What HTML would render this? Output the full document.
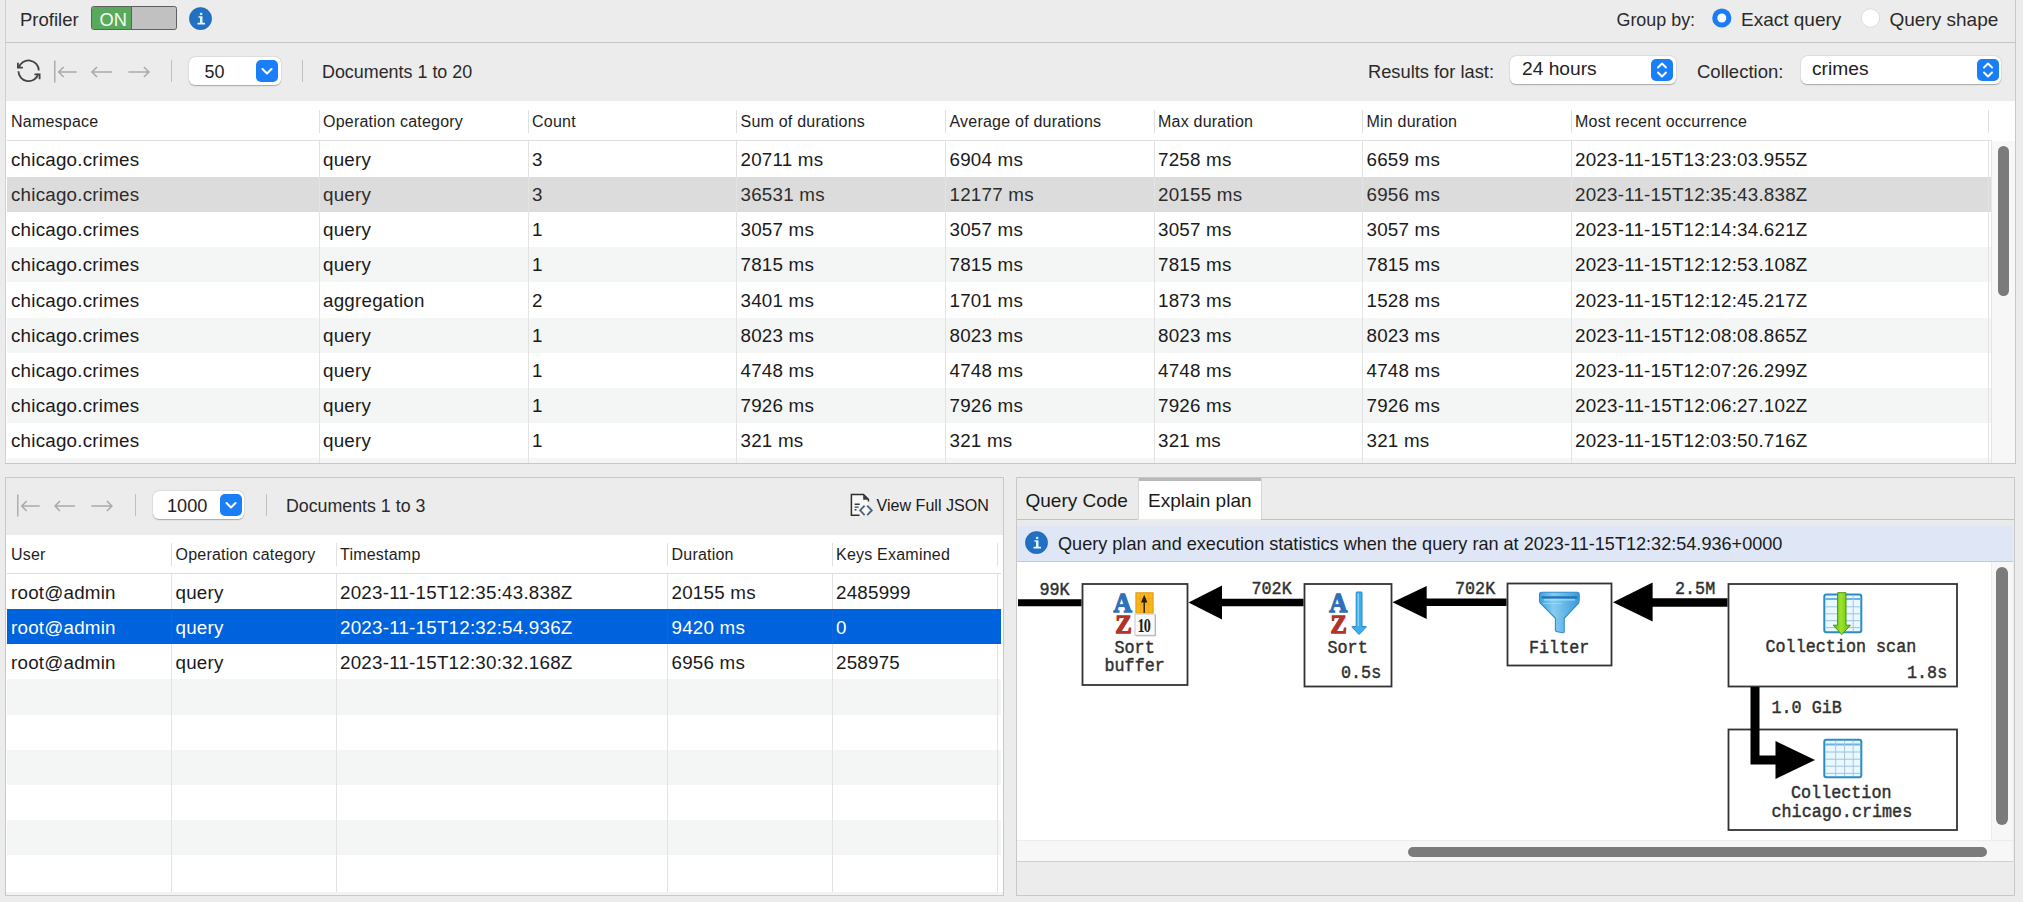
<!DOCTYPE html>
<html><head><meta charset="utf-8"><title>Profiler</title>
<style>
html,body{margin:0;padding:0}
body{width:2023px;height:902px;overflow:hidden;background:#ececec;position:relative;font-family:"Liberation Sans",sans-serif}
.r{position:absolute}
.t{position:absolute;white-space:pre;line-height:normal}
</style></head><body>
<div class="r" style="left:5px;top:0px;width:1px;height:464px;background:#d0d0d0"></div>
<div class="r" style="left:2015px;top:0px;width:1px;height:464px;background:#c8c8c8"></div>
<div class="r" style="left:5px;top:42px;width:1011px;height:1px;background:#c4c4c4"></div>
<div class="r" style="left:5px;top:42px;width:2011px;height:1px;background:#c4c4c4"></div>
<div class="t" style="left:20.00px;top:9.26px;font-size:18.5px;color:#2a2a2a;font-family:'Liberation Sans', sans-serif;font-weight:normal;">Profiler</div>
<div class="r" style="left:91px;top:6px;width:85.6px;height:24px;box-sizing:border-box;border:1.5px solid #5f5f5f;border-radius:2.5px;background:#c1c1c1;overflow:hidden"><div class="r" style="left:0;top:0;width:38.6px;height:24px;background:#59a95d;border-right:1.5px solid #5f5f5f"></div></div>
<div class="t" style="left:99.60px;top:9.24px;font-size:18.3px;color:#effff0;font-family:'Liberation Sans', sans-serif;font-weight:normal;">ON</div>
<svg class="r" style="left:189px;top:7px" width="23" height="23" viewBox="0 0 23 23"><circle cx="11.5" cy="11.6" r="11.1" fill="#2170c4" stroke="#1f5fa8" stroke-width="0.6"/><rect x="10.9" y="5.8" width="2.4" height="2.3" fill="#bff0ff"/><path d="M9.5 9.2H13.5V15.8H16V17.4H8.5V15.8H11V10.8H9.5Z" fill="#e4f6ff"/></svg>
<div class="t" style="left:1616.50px;top:9.80px;font-size:17.9px;color:#2a2a2a;font-family:'Liberation Sans', sans-serif;font-weight:normal;">Group by:</div>
<svg class="r" style="left:1711px;top:8px" width="22" height="22" viewBox="0 0 22 22"><circle cx="10.8" cy="10" r="9.6" fill="#1b7cf4"/><circle cx="10.8" cy="10" r="4.5" fill="#fff"/></svg>
<div class="t" style="left:1741.00px;top:8.80px;font-size:19px;color:#2a2a2a;font-family:'Liberation Sans', sans-serif;font-weight:normal;">Exact query</div>
<svg class="r" style="left:1860px;top:8px" width="22" height="22" viewBox="0 0 22 22"><circle cx="10.5" cy="10" r="9.2" fill="#fff" stroke="#d6d6d6" stroke-width="0.8"/></svg>
<div class="t" style="left:1889.50px;top:8.80px;font-size:19px;color:#2a2a2a;font-family:'Liberation Sans', sans-serif;font-weight:normal;">Query shape</div>
<svg class="r" style="left:0;top:0" width="60" height="100" viewBox="0 0 60 100"><path d="M18.8 67.8A10.2 10.2 0 0 1 38.8 70.6" fill="none" stroke="#424242" stroke-width="1.8"/><path d="M18.4 71.2A10.2 10.2 0 0 0 38.4 73.8" fill="none" stroke="#424242" stroke-width="1.8"/><path d="M17.9 62.8V67.7H22.9" fill="none" stroke="#424242" stroke-width="1.8"/><path d="M34.5 74.3H39.6V79.3" fill="none" stroke="#424242" stroke-width="1.8"/></svg>
<svg class="r" style="left:54px;top:59.5px" width="100" height="24" viewBox="0 0 100 24"><path d="M0.8 0.5v22" stroke="#a9a9a9" stroke-width="1.4" fill="none"/><path d="M4.6 12h18.1M9.7 7l-5 5 5 5" stroke="#a9a9a9" stroke-width="1.5" fill="none"/><path d="M38 12h20M43 7l-5 5 5 5" stroke="#a9a9a9" stroke-width="1.5" fill="none"/><path d="M74.4 12h20.5M89.9 7l5 5-5 5" stroke="#a9a9a9" stroke-width="1.5" fill="none"/></svg>
<div class="r" style="left:171px;top:60px;width:1px;height:22px;background:#c0c0c0"></div>
<div class="r" style="left:189px;top:57px;width:92px;height:28px;background:#fff;border-radius:6px;box-shadow:0 0.6px 1.2px rgba(0,0,0,0.28), 0 0 0 0.5px rgba(0,0,0,0.05)"></div>
<div class="r" style="left:256px;top:60px;width:22px;height:22px;background:#1a7ef6;border-radius:5px"></div>
<svg class="r" style="left:256px;top:60px" width="22" height="22" viewBox="0 0 22 22"><path d="M6.5 9l4.5 4.5 4.5-4.5" stroke="#fff" stroke-width="2.1" fill="none" stroke-linecap="round" stroke-linejoin="round"/></svg>
<div class="t" style="left:204.50px;top:61.80px;font-size:17.9px;color:#222;font-family:'Liberation Sans', sans-serif;font-weight:normal;">50</div>
<div class="r" style="left:302px;top:60px;width:1px;height:22px;background:#c0c0c0"></div>
<div class="t" style="left:322.00px;top:61.80px;font-size:17.9px;color:#2a2a2a;font-family:'Liberation Sans', sans-serif;font-weight:normal;">Documents 1 to 20</div>
<div class="t" style="left:1368.00px;top:61.44px;font-size:18.3px;color:#2a2a2a;font-family:'Liberation Sans', sans-serif;font-weight:normal;">Results for last:</div>
<div class="r" style="left:1510px;top:56px;width:166px;height:28px;background:#fff;border-radius:6px;box-shadow:0 0.6px 1.2px rgba(0,0,0,0.28), 0 0 0 0.5px rgba(0,0,0,0.05)"></div>
<div class="r" style="left:1651px;top:59px;width:22px;height:22px;background:#1a7ef6;border-radius:5px"></div>
<svg class="r" style="left:1651px;top:59px" width="22" height="22" viewBox="0 0 22 22"><path d="M7 8.5l4-4 4 4M7 13.5l4 4 4-4" stroke="#fff" stroke-width="1.9" fill="none" stroke-linecap="round" stroke-linejoin="round"/></svg>
<div class="t" style="left:1522.00px;top:57.92px;font-size:19.2px;color:#222;font-family:'Liberation Sans', sans-serif;font-weight:normal;">24 hours</div>
<div class="t" style="left:1697.00px;top:60.76px;font-size:18.5px;color:#2a2a2a;font-family:'Liberation Sans', sans-serif;font-weight:normal;">Collection:</div>
<div class="r" style="left:1801px;top:56px;width:200px;height:28px;background:#fff;border-radius:6px;box-shadow:0 0.6px 1.2px rgba(0,0,0,0.28), 0 0 0 0.5px rgba(0,0,0,0.05)"></div>
<div class="r" style="left:1977px;top:59px;width:22px;height:22px;background:#1a7ef6;border-radius:5px"></div>
<svg class="r" style="left:1977px;top:59px" width="22" height="22" viewBox="0 0 22 22"><path d="M7 8.5l4-4 4 4M7 13.5l4 4 4-4" stroke="#fff" stroke-width="1.9" fill="none" stroke-linecap="round" stroke-linejoin="round"/></svg>
<div class="t" style="left:1812.00px;top:57.92px;font-size:19.2px;color:#222;font-family:'Liberation Sans', sans-serif;font-weight:normal;">crimes</div>
<div class="r" style="left:6px;top:101px;width:2009px;height:363px;background:#fff"></div>
<div class="r" style="left:7px;top:140px;width:1985px;height:1px;background:#dedede"></div>
<div class="r" style="left:7px;top:141.00px;width:1985px;height:36.00px;background:#ffffff"></div>
<div class="r" style="left:7px;top:177.00px;width:1985px;height:35.15px;background:#dcdcdc"></div>
<div class="r" style="left:7px;top:212.15px;width:1985px;height:35.15px;background:#ffffff"></div>
<div class="r" style="left:7px;top:247.30px;width:1985px;height:35.15px;background:#f4f5f5"></div>
<div class="r" style="left:7px;top:282.45px;width:1985px;height:35.15px;background:#ffffff"></div>
<div class="r" style="left:7px;top:317.60px;width:1985px;height:35.15px;background:#f4f5f5"></div>
<div class="r" style="left:7px;top:352.75px;width:1985px;height:35.15px;background:#ffffff"></div>
<div class="r" style="left:7px;top:387.90px;width:1985px;height:35.15px;background:#f4f5f5"></div>
<div class="r" style="left:7px;top:423.05px;width:1985px;height:35.15px;background:#ffffff"></div>
<div class="r" style="left:7px;top:458.20px;width:1985px;height:0.80px;background:#f4f5f5"></div>
<div class="r" style="left:7px;top:459px;width:1985px;height:4px;background:#f5f5f5"></div>
<div class="r" style="left:319px;top:110px;width:1px;height:23px;background:#e0e0e0"></div>
<div class="r" style="left:319px;top:141px;width:1px;height:322px;background:#e3e3e3"></div>
<div class="r" style="left:528px;top:110px;width:1px;height:23px;background:#e0e0e0"></div>
<div class="r" style="left:528px;top:141px;width:1px;height:322px;background:#e3e3e3"></div>
<div class="r" style="left:736px;top:110px;width:1px;height:23px;background:#e0e0e0"></div>
<div class="r" style="left:736px;top:141px;width:1px;height:322px;background:#e3e3e3"></div>
<div class="r" style="left:945px;top:110px;width:1px;height:23px;background:#e0e0e0"></div>
<div class="r" style="left:945px;top:141px;width:1px;height:322px;background:#e3e3e3"></div>
<div class="r" style="left:1154px;top:110px;width:1px;height:23px;background:#e0e0e0"></div>
<div class="r" style="left:1154px;top:141px;width:1px;height:322px;background:#e3e3e3"></div>
<div class="r" style="left:1362px;top:110px;width:1px;height:23px;background:#e0e0e0"></div>
<div class="r" style="left:1362px;top:141px;width:1px;height:322px;background:#e3e3e3"></div>
<div class="r" style="left:1571px;top:110px;width:1px;height:23px;background:#e0e0e0"></div>
<div class="r" style="left:1571px;top:141px;width:1px;height:322px;background:#e3e3e3"></div>
<div class="r" style="left:1988px;top:110px;width:1px;height:23px;background:#e0e0e0"></div>
<div class="r" style="left:1988px;top:141px;width:1px;height:322px;background:#e3e3e3"></div>
<div class="t" style="left:11.00px;top:113.02px;font-size:16px;color:#1e1e1e;font-family:'Liberation Sans', sans-serif;font-weight:normal;letter-spacing:0.22px">Namespace</div>
<div class="t" style="left:323.00px;top:113.02px;font-size:16px;color:#1e1e1e;font-family:'Liberation Sans', sans-serif;font-weight:normal;letter-spacing:0.22px">Operation category</div>
<div class="t" style="left:532.00px;top:113.02px;font-size:16px;color:#1e1e1e;font-family:'Liberation Sans', sans-serif;font-weight:normal;letter-spacing:0.22px">Count</div>
<div class="t" style="left:740.50px;top:113.02px;font-size:16px;color:#1e1e1e;font-family:'Liberation Sans', sans-serif;font-weight:normal;letter-spacing:0.22px">Sum of durations</div>
<div class="t" style="left:949.50px;top:113.02px;font-size:16px;color:#1e1e1e;font-family:'Liberation Sans', sans-serif;font-weight:normal;letter-spacing:0.22px">Average of durations</div>
<div class="t" style="left:1158.00px;top:113.02px;font-size:16px;color:#1e1e1e;font-family:'Liberation Sans', sans-serif;font-weight:normal;letter-spacing:0.22px">Max duration</div>
<div class="t" style="left:1366.50px;top:113.02px;font-size:16px;color:#1e1e1e;font-family:'Liberation Sans', sans-serif;font-weight:normal;letter-spacing:0.22px">Min duration</div>
<div class="t" style="left:1575.00px;top:113.02px;font-size:16px;color:#1e1e1e;font-family:'Liberation Sans', sans-serif;font-weight:normal;letter-spacing:0.22px">Most recent occurrence</div>
<div class="t" style="left:11.00px;top:148.99px;font-size:18.8px;color:#1a1a1a;font-family:'Liberation Sans', sans-serif;font-weight:normal;letter-spacing:0.22px">chicago.crimes</div>
<div class="t" style="left:323.00px;top:148.99px;font-size:18.8px;color:#1a1a1a;font-family:'Liberation Sans', sans-serif;font-weight:normal;letter-spacing:0.22px">query</div>
<div class="t" style="left:532.00px;top:148.99px;font-size:18.8px;color:#1a1a1a;font-family:'Liberation Sans', sans-serif;font-weight:normal;letter-spacing:0.22px">3</div>
<div class="t" style="left:740.50px;top:148.99px;font-size:18.8px;color:#1a1a1a;font-family:'Liberation Sans', sans-serif;font-weight:normal;letter-spacing:0.22px">20711 ms</div>
<div class="t" style="left:949.50px;top:148.99px;font-size:18.8px;color:#1a1a1a;font-family:'Liberation Sans', sans-serif;font-weight:normal;letter-spacing:0.22px">6904 ms</div>
<div class="t" style="left:1158.00px;top:148.99px;font-size:18.8px;color:#1a1a1a;font-family:'Liberation Sans', sans-serif;font-weight:normal;letter-spacing:0.22px">7258 ms</div>
<div class="t" style="left:1366.50px;top:148.99px;font-size:18.8px;color:#1a1a1a;font-family:'Liberation Sans', sans-serif;font-weight:normal;letter-spacing:0.22px">6659 ms</div>
<div class="t" style="left:1575.00px;top:148.99px;font-size:18.8px;color:#1a1a1a;font-family:'Liberation Sans', sans-serif;font-weight:normal;letter-spacing:0.22px">2023-11-15T13:23:03.955Z</div>
<div class="t" style="left:11.00px;top:184.14px;font-size:18.8px;color:#2c2c2c;font-family:'Liberation Sans', sans-serif;font-weight:normal;letter-spacing:0.22px">chicago.crimes</div>
<div class="t" style="left:323.00px;top:184.14px;font-size:18.8px;color:#2c2c2c;font-family:'Liberation Sans', sans-serif;font-weight:normal;letter-spacing:0.22px">query</div>
<div class="t" style="left:532.00px;top:184.14px;font-size:18.8px;color:#2c2c2c;font-family:'Liberation Sans', sans-serif;font-weight:normal;letter-spacing:0.22px">3</div>
<div class="t" style="left:740.50px;top:184.14px;font-size:18.8px;color:#2c2c2c;font-family:'Liberation Sans', sans-serif;font-weight:normal;letter-spacing:0.22px">36531 ms</div>
<div class="t" style="left:949.50px;top:184.14px;font-size:18.8px;color:#2c2c2c;font-family:'Liberation Sans', sans-serif;font-weight:normal;letter-spacing:0.22px">12177 ms</div>
<div class="t" style="left:1158.00px;top:184.14px;font-size:18.8px;color:#2c2c2c;font-family:'Liberation Sans', sans-serif;font-weight:normal;letter-spacing:0.22px">20155 ms</div>
<div class="t" style="left:1366.50px;top:184.14px;font-size:18.8px;color:#2c2c2c;font-family:'Liberation Sans', sans-serif;font-weight:normal;letter-spacing:0.22px">6956 ms</div>
<div class="t" style="left:1575.00px;top:184.14px;font-size:18.8px;color:#2c2c2c;font-family:'Liberation Sans', sans-serif;font-weight:normal;letter-spacing:0.22px">2023-11-15T12:35:43.838Z</div>
<div class="t" style="left:11.00px;top:219.29px;font-size:18.8px;color:#1a1a1a;font-family:'Liberation Sans', sans-serif;font-weight:normal;letter-spacing:0.22px">chicago.crimes</div>
<div class="t" style="left:323.00px;top:219.29px;font-size:18.8px;color:#1a1a1a;font-family:'Liberation Sans', sans-serif;font-weight:normal;letter-spacing:0.22px">query</div>
<div class="t" style="left:532.00px;top:219.29px;font-size:18.8px;color:#1a1a1a;font-family:'Liberation Sans', sans-serif;font-weight:normal;letter-spacing:0.22px">1</div>
<div class="t" style="left:740.50px;top:219.29px;font-size:18.8px;color:#1a1a1a;font-family:'Liberation Sans', sans-serif;font-weight:normal;letter-spacing:0.22px">3057 ms</div>
<div class="t" style="left:949.50px;top:219.29px;font-size:18.8px;color:#1a1a1a;font-family:'Liberation Sans', sans-serif;font-weight:normal;letter-spacing:0.22px">3057 ms</div>
<div class="t" style="left:1158.00px;top:219.29px;font-size:18.8px;color:#1a1a1a;font-family:'Liberation Sans', sans-serif;font-weight:normal;letter-spacing:0.22px">3057 ms</div>
<div class="t" style="left:1366.50px;top:219.29px;font-size:18.8px;color:#1a1a1a;font-family:'Liberation Sans', sans-serif;font-weight:normal;letter-spacing:0.22px">3057 ms</div>
<div class="t" style="left:1575.00px;top:219.29px;font-size:18.8px;color:#1a1a1a;font-family:'Liberation Sans', sans-serif;font-weight:normal;letter-spacing:0.22px">2023-11-15T12:14:34.621Z</div>
<div class="t" style="left:11.00px;top:254.44px;font-size:18.8px;color:#1a1a1a;font-family:'Liberation Sans', sans-serif;font-weight:normal;letter-spacing:0.22px">chicago.crimes</div>
<div class="t" style="left:323.00px;top:254.44px;font-size:18.8px;color:#1a1a1a;font-family:'Liberation Sans', sans-serif;font-weight:normal;letter-spacing:0.22px">query</div>
<div class="t" style="left:532.00px;top:254.44px;font-size:18.8px;color:#1a1a1a;font-family:'Liberation Sans', sans-serif;font-weight:normal;letter-spacing:0.22px">1</div>
<div class="t" style="left:740.50px;top:254.44px;font-size:18.8px;color:#1a1a1a;font-family:'Liberation Sans', sans-serif;font-weight:normal;letter-spacing:0.22px">7815 ms</div>
<div class="t" style="left:949.50px;top:254.44px;font-size:18.8px;color:#1a1a1a;font-family:'Liberation Sans', sans-serif;font-weight:normal;letter-spacing:0.22px">7815 ms</div>
<div class="t" style="left:1158.00px;top:254.44px;font-size:18.8px;color:#1a1a1a;font-family:'Liberation Sans', sans-serif;font-weight:normal;letter-spacing:0.22px">7815 ms</div>
<div class="t" style="left:1366.50px;top:254.44px;font-size:18.8px;color:#1a1a1a;font-family:'Liberation Sans', sans-serif;font-weight:normal;letter-spacing:0.22px">7815 ms</div>
<div class="t" style="left:1575.00px;top:254.44px;font-size:18.8px;color:#1a1a1a;font-family:'Liberation Sans', sans-serif;font-weight:normal;letter-spacing:0.22px">2023-11-15T12:12:53.108Z</div>
<div class="t" style="left:11.00px;top:289.59px;font-size:18.8px;color:#1a1a1a;font-family:'Liberation Sans', sans-serif;font-weight:normal;letter-spacing:0.22px">chicago.crimes</div>
<div class="t" style="left:323.00px;top:289.59px;font-size:18.8px;color:#1a1a1a;font-family:'Liberation Sans', sans-serif;font-weight:normal;letter-spacing:0.22px">aggregation</div>
<div class="t" style="left:532.00px;top:289.59px;font-size:18.8px;color:#1a1a1a;font-family:'Liberation Sans', sans-serif;font-weight:normal;letter-spacing:0.22px">2</div>
<div class="t" style="left:740.50px;top:289.59px;font-size:18.8px;color:#1a1a1a;font-family:'Liberation Sans', sans-serif;font-weight:normal;letter-spacing:0.22px">3401 ms</div>
<div class="t" style="left:949.50px;top:289.59px;font-size:18.8px;color:#1a1a1a;font-family:'Liberation Sans', sans-serif;font-weight:normal;letter-spacing:0.22px">1701 ms</div>
<div class="t" style="left:1158.00px;top:289.59px;font-size:18.8px;color:#1a1a1a;font-family:'Liberation Sans', sans-serif;font-weight:normal;letter-spacing:0.22px">1873 ms</div>
<div class="t" style="left:1366.50px;top:289.59px;font-size:18.8px;color:#1a1a1a;font-family:'Liberation Sans', sans-serif;font-weight:normal;letter-spacing:0.22px">1528 ms</div>
<div class="t" style="left:1575.00px;top:289.59px;font-size:18.8px;color:#1a1a1a;font-family:'Liberation Sans', sans-serif;font-weight:normal;letter-spacing:0.22px">2023-11-15T12:12:45.217Z</div>
<div class="t" style="left:11.00px;top:324.74px;font-size:18.8px;color:#1a1a1a;font-family:'Liberation Sans', sans-serif;font-weight:normal;letter-spacing:0.22px">chicago.crimes</div>
<div class="t" style="left:323.00px;top:324.74px;font-size:18.8px;color:#1a1a1a;font-family:'Liberation Sans', sans-serif;font-weight:normal;letter-spacing:0.22px">query</div>
<div class="t" style="left:532.00px;top:324.74px;font-size:18.8px;color:#1a1a1a;font-family:'Liberation Sans', sans-serif;font-weight:normal;letter-spacing:0.22px">1</div>
<div class="t" style="left:740.50px;top:324.74px;font-size:18.8px;color:#1a1a1a;font-family:'Liberation Sans', sans-serif;font-weight:normal;letter-spacing:0.22px">8023 ms</div>
<div class="t" style="left:949.50px;top:324.74px;font-size:18.8px;color:#1a1a1a;font-family:'Liberation Sans', sans-serif;font-weight:normal;letter-spacing:0.22px">8023 ms</div>
<div class="t" style="left:1158.00px;top:324.74px;font-size:18.8px;color:#1a1a1a;font-family:'Liberation Sans', sans-serif;font-weight:normal;letter-spacing:0.22px">8023 ms</div>
<div class="t" style="left:1366.50px;top:324.74px;font-size:18.8px;color:#1a1a1a;font-family:'Liberation Sans', sans-serif;font-weight:normal;letter-spacing:0.22px">8023 ms</div>
<div class="t" style="left:1575.00px;top:324.74px;font-size:18.8px;color:#1a1a1a;font-family:'Liberation Sans', sans-serif;font-weight:normal;letter-spacing:0.22px">2023-11-15T12:08:08.865Z</div>
<div class="t" style="left:11.00px;top:359.89px;font-size:18.8px;color:#1a1a1a;font-family:'Liberation Sans', sans-serif;font-weight:normal;letter-spacing:0.22px">chicago.crimes</div>
<div class="t" style="left:323.00px;top:359.89px;font-size:18.8px;color:#1a1a1a;font-family:'Liberation Sans', sans-serif;font-weight:normal;letter-spacing:0.22px">query</div>
<div class="t" style="left:532.00px;top:359.89px;font-size:18.8px;color:#1a1a1a;font-family:'Liberation Sans', sans-serif;font-weight:normal;letter-spacing:0.22px">1</div>
<div class="t" style="left:740.50px;top:359.89px;font-size:18.8px;color:#1a1a1a;font-family:'Liberation Sans', sans-serif;font-weight:normal;letter-spacing:0.22px">4748 ms</div>
<div class="t" style="left:949.50px;top:359.89px;font-size:18.8px;color:#1a1a1a;font-family:'Liberation Sans', sans-serif;font-weight:normal;letter-spacing:0.22px">4748 ms</div>
<div class="t" style="left:1158.00px;top:359.89px;font-size:18.8px;color:#1a1a1a;font-family:'Liberation Sans', sans-serif;font-weight:normal;letter-spacing:0.22px">4748 ms</div>
<div class="t" style="left:1366.50px;top:359.89px;font-size:18.8px;color:#1a1a1a;font-family:'Liberation Sans', sans-serif;font-weight:normal;letter-spacing:0.22px">4748 ms</div>
<div class="t" style="left:1575.00px;top:359.89px;font-size:18.8px;color:#1a1a1a;font-family:'Liberation Sans', sans-serif;font-weight:normal;letter-spacing:0.22px">2023-11-15T12:07:26.299Z</div>
<div class="t" style="left:11.00px;top:395.04px;font-size:18.8px;color:#1a1a1a;font-family:'Liberation Sans', sans-serif;font-weight:normal;letter-spacing:0.22px">chicago.crimes</div>
<div class="t" style="left:323.00px;top:395.04px;font-size:18.8px;color:#1a1a1a;font-family:'Liberation Sans', sans-serif;font-weight:normal;letter-spacing:0.22px">query</div>
<div class="t" style="left:532.00px;top:395.04px;font-size:18.8px;color:#1a1a1a;font-family:'Liberation Sans', sans-serif;font-weight:normal;letter-spacing:0.22px">1</div>
<div class="t" style="left:740.50px;top:395.04px;font-size:18.8px;color:#1a1a1a;font-family:'Liberation Sans', sans-serif;font-weight:normal;letter-spacing:0.22px">7926 ms</div>
<div class="t" style="left:949.50px;top:395.04px;font-size:18.8px;color:#1a1a1a;font-family:'Liberation Sans', sans-serif;font-weight:normal;letter-spacing:0.22px">7926 ms</div>
<div class="t" style="left:1158.00px;top:395.04px;font-size:18.8px;color:#1a1a1a;font-family:'Liberation Sans', sans-serif;font-weight:normal;letter-spacing:0.22px">7926 ms</div>
<div class="t" style="left:1366.50px;top:395.04px;font-size:18.8px;color:#1a1a1a;font-family:'Liberation Sans', sans-serif;font-weight:normal;letter-spacing:0.22px">7926 ms</div>
<div class="t" style="left:1575.00px;top:395.04px;font-size:18.8px;color:#1a1a1a;font-family:'Liberation Sans', sans-serif;font-weight:normal;letter-spacing:0.22px">2023-11-15T12:06:27.102Z</div>
<div class="t" style="left:11.00px;top:430.19px;font-size:18.8px;color:#1a1a1a;font-family:'Liberation Sans', sans-serif;font-weight:normal;letter-spacing:0.22px">chicago.crimes</div>
<div class="t" style="left:323.00px;top:430.19px;font-size:18.8px;color:#1a1a1a;font-family:'Liberation Sans', sans-serif;font-weight:normal;letter-spacing:0.22px">query</div>
<div class="t" style="left:532.00px;top:430.19px;font-size:18.8px;color:#1a1a1a;font-family:'Liberation Sans', sans-serif;font-weight:normal;letter-spacing:0.22px">1</div>
<div class="t" style="left:740.50px;top:430.19px;font-size:18.8px;color:#1a1a1a;font-family:'Liberation Sans', sans-serif;font-weight:normal;letter-spacing:0.22px">321 ms</div>
<div class="t" style="left:949.50px;top:430.19px;font-size:18.8px;color:#1a1a1a;font-family:'Liberation Sans', sans-serif;font-weight:normal;letter-spacing:0.22px">321 ms</div>
<div class="t" style="left:1158.00px;top:430.19px;font-size:18.8px;color:#1a1a1a;font-family:'Liberation Sans', sans-serif;font-weight:normal;letter-spacing:0.22px">321 ms</div>
<div class="t" style="left:1366.50px;top:430.19px;font-size:18.8px;color:#1a1a1a;font-family:'Liberation Sans', sans-serif;font-weight:normal;letter-spacing:0.22px">321 ms</div>
<div class="t" style="left:1575.00px;top:430.19px;font-size:18.8px;color:#1a1a1a;font-family:'Liberation Sans', sans-serif;font-weight:normal;letter-spacing:0.22px">2023-11-15T12:03:50.716Z</div>
<div class="r" style="left:1991px;top:141px;width:24px;height:322px;background:#f7f7f7;border-left:1px solid #e6e6e6;box-sizing:border-box;width:24px"></div>
<div class="r" style="left:1998px;top:145.5px;width:11px;height:150px;background:#7b7b7b;border-radius:6px"></div>
<div class="r" style="left:5px;top:463px;width:1011px;height:1px;background:#c8c8c8"></div>
<div class="r" style="left:5px;top:463px;width:2011px;height:1px;background:#c8c8c8"></div>
<div class="r" style="left:5px;top:477px;width:999px;height:419px;background:#ececec;border:1px solid #c8c8c8;box-sizing:border-box"></div>
<svg class="r" style="left:17.2px;top:493.5px" width="100" height="24" viewBox="0 0 100 24"><path d="M0.8 0.5v22" stroke="#a9a9a9" stroke-width="1.4" fill="none"/><path d="M4.6 12h18.1M9.7 7l-5 5 5 5" stroke="#a9a9a9" stroke-width="1.5" fill="none"/><path d="M38 12h20M43 7l-5 5 5 5" stroke="#a9a9a9" stroke-width="1.5" fill="none"/><path d="M74.4 12h20.5M89.9 7l5 5-5 5" stroke="#a9a9a9" stroke-width="1.5" fill="none"/></svg>
<div class="r" style="left:135px;top:494px;width:1px;height:22px;background:#c0c0c0"></div>
<div class="r" style="left:152.5px;top:491px;width:91.5px;height:28px;background:#fff;border-radius:6px;box-shadow:0 0.6px 1.2px rgba(0,0,0,0.28), 0 0 0 0.5px rgba(0,0,0,0.05)"></div>
<div class="r" style="left:219.5px;top:494px;width:22px;height:22px;background:#1a7ef6;border-radius:5px"></div>
<svg class="r" style="left:219.5px;top:494px" width="22" height="22" viewBox="0 0 22 22"><path d="M6.5 9l4.5 4.5 4.5-4.5" stroke="#fff" stroke-width="2.1" fill="none" stroke-linecap="round" stroke-linejoin="round"/></svg>
<div class="t" style="left:167.00px;top:495.62px;font-size:18.1px;color:#222;font-family:'Liberation Sans', sans-serif;font-weight:normal;">1000</div>
<div class="r" style="left:266px;top:494px;width:1px;height:22px;background:#c0c0c0"></div>
<div class="t" style="left:286.00px;top:495.89px;font-size:17.8px;color:#2a2a2a;font-family:'Liberation Sans', sans-serif;font-weight:normal;">Documents 1 to 3</div>
<svg class="r" style="left:0;top:0" width="1000" height="530" viewBox="0 0 1000 530"><path d="M851.5 515.2V494.5H863.4L868.3 499.4V516H851.5Z" fill="#f8f8f8"/><path d="M859.6 515.3H851.4V494.4H863.5L868.4 499.3V501.5" fill="none" stroke="#2e2e2e" stroke-width="1.5"/><path d="M863.2 494.6L868.2 499.7H863.2Z" fill="#3a3a3a"/><path d="M854.6 504.3H859.8M854.6 507.1H858.6M854.6 509.7H856.5" stroke="#3c3c3c" stroke-width="1.4"/><path d="M864.6 505.6L860.1 510.4L864.6 515.2M867.2 505.6L871.8 510.4L867.2 515.2" fill="none" stroke="#4b6379" stroke-width="1.8"/></svg>
<div class="t" style="left:876.50px;top:495.93px;font-size:16.1px;color:#1a1a1a;font-family:'Liberation Sans', sans-serif;font-weight:normal;">View Full JSON</div>
<div class="r" style="left:6px;top:534.5px;width:997px;height:360px;background:#fff"></div>
<div class="r" style="left:7px;top:573px;width:994px;height:1px;background:#dedede"></div>
<div class="r" style="left:7px;top:574.00px;width:994px;height:35.15px;background:#ffffff"></div>
<div class="r" style="left:7px;top:609.15px;width:994px;height:35.15px;background:#0063de"></div>
<div class="r" style="left:7px;top:644.30px;width:994px;height:35.15px;background:#ffffff"></div>
<div class="r" style="left:7px;top:679.45px;width:994px;height:35.15px;background:#f4f5f5"></div>
<div class="r" style="left:7px;top:714.60px;width:994px;height:35.15px;background:#ffffff"></div>
<div class="r" style="left:7px;top:749.75px;width:994px;height:35.15px;background:#f4f5f5"></div>
<div class="r" style="left:7px;top:784.90px;width:994px;height:35.15px;background:#ffffff"></div>
<div class="r" style="left:7px;top:820.05px;width:994px;height:35.15px;background:#f4f5f5"></div>
<div class="r" style="left:7px;top:855.20px;width:994px;height:35.15px;background:#ffffff"></div>
<div class="r" style="left:171px;top:543px;width:1px;height:23px;background:#e0e0e0"></div>
<div class="r" style="left:171px;top:574px;width:1px;height:318px;background:#e3e3e3"></div>
<div class="r" style="left:336px;top:543px;width:1px;height:23px;background:#e0e0e0"></div>
<div class="r" style="left:336px;top:574px;width:1px;height:318px;background:#e3e3e3"></div>
<div class="r" style="left:667px;top:543px;width:1px;height:23px;background:#e0e0e0"></div>
<div class="r" style="left:667px;top:574px;width:1px;height:318px;background:#e3e3e3"></div>
<div class="r" style="left:832px;top:543px;width:1px;height:23px;background:#e0e0e0"></div>
<div class="r" style="left:832px;top:574px;width:1px;height:318px;background:#e3e3e3"></div>
<div class="r" style="left:997px;top:543px;width:1px;height:23px;background:#e0e0e0"></div>
<div class="r" style="left:997px;top:574px;width:1px;height:318px;background:#e3e3e3"></div>
<div class="r" style="left:7px;top:609.15px;width:994px;height:35.15px;background:#0063de"></div>
<div class="r" style="left:171px;top:610px;width:1px;height:34px;background:#1a6ad8;opacity:0.6"></div>
<div class="r" style="left:336px;top:610px;width:1px;height:34px;background:#1a6ad8;opacity:0.6"></div>
<div class="r" style="left:667px;top:610px;width:1px;height:34px;background:#1a6ad8;opacity:0.6"></div>
<div class="r" style="left:832px;top:610px;width:1px;height:34px;background:#1a6ad8;opacity:0.6"></div>
<div class="t" style="left:11.00px;top:546.02px;font-size:16px;color:#1e1e1e;font-family:'Liberation Sans', sans-serif;font-weight:normal;letter-spacing:0.22px">User</div>
<div class="t" style="left:175.50px;top:546.02px;font-size:16px;color:#1e1e1e;font-family:'Liberation Sans', sans-serif;font-weight:normal;letter-spacing:0.22px">Operation category</div>
<div class="t" style="left:340.00px;top:546.02px;font-size:16px;color:#1e1e1e;font-family:'Liberation Sans', sans-serif;font-weight:normal;letter-spacing:0.22px">Timestamp</div>
<div class="t" style="left:671.50px;top:546.02px;font-size:16px;color:#1e1e1e;font-family:'Liberation Sans', sans-serif;font-weight:normal;letter-spacing:0.22px">Duration</div>
<div class="t" style="left:836.00px;top:546.02px;font-size:16px;color:#1e1e1e;font-family:'Liberation Sans', sans-serif;font-weight:normal;letter-spacing:0.22px">Keys Examined</div>
<div class="t" style="left:11.00px;top:581.99px;font-size:18.8px;color:#1a1a1a;font-family:'Liberation Sans', sans-serif;font-weight:normal;letter-spacing:0.22px">root@admin</div>
<div class="t" style="left:175.50px;top:581.99px;font-size:18.8px;color:#1a1a1a;font-family:'Liberation Sans', sans-serif;font-weight:normal;letter-spacing:0.22px">query</div>
<div class="t" style="left:340.00px;top:581.99px;font-size:18.8px;color:#1a1a1a;font-family:'Liberation Sans', sans-serif;font-weight:normal;letter-spacing:0.22px">2023-11-15T12:35:43.838Z</div>
<div class="t" style="left:671.50px;top:581.99px;font-size:18.8px;color:#1a1a1a;font-family:'Liberation Sans', sans-serif;font-weight:normal;letter-spacing:0.22px">20155 ms</div>
<div class="t" style="left:836.00px;top:581.99px;font-size:18.8px;color:#1a1a1a;font-family:'Liberation Sans', sans-serif;font-weight:normal;letter-spacing:0.22px">2485999</div>
<div class="t" style="left:11.00px;top:617.14px;font-size:18.8px;color:#fff;font-family:'Liberation Sans', sans-serif;font-weight:normal;letter-spacing:0.22px">root@admin</div>
<div class="t" style="left:175.50px;top:617.14px;font-size:18.8px;color:#fff;font-family:'Liberation Sans', sans-serif;font-weight:normal;letter-spacing:0.22px">query</div>
<div class="t" style="left:340.00px;top:617.14px;font-size:18.8px;color:#fff;font-family:'Liberation Sans', sans-serif;font-weight:normal;letter-spacing:0.22px">2023-11-15T12:32:54.936Z</div>
<div class="t" style="left:671.50px;top:617.14px;font-size:18.8px;color:#fff;font-family:'Liberation Sans', sans-serif;font-weight:normal;letter-spacing:0.22px">9420 ms</div>
<div class="t" style="left:836.00px;top:617.14px;font-size:18.8px;color:#fff;font-family:'Liberation Sans', sans-serif;font-weight:normal;letter-spacing:0.22px">0</div>
<div class="t" style="left:11.00px;top:652.29px;font-size:18.8px;color:#1a1a1a;font-family:'Liberation Sans', sans-serif;font-weight:normal;letter-spacing:0.22px">root@admin</div>
<div class="t" style="left:175.50px;top:652.29px;font-size:18.8px;color:#1a1a1a;font-family:'Liberation Sans', sans-serif;font-weight:normal;letter-spacing:0.22px">query</div>
<div class="t" style="left:340.00px;top:652.29px;font-size:18.8px;color:#1a1a1a;font-family:'Liberation Sans', sans-serif;font-weight:normal;letter-spacing:0.22px">2023-11-15T12:30:32.168Z</div>
<div class="t" style="left:671.50px;top:652.29px;font-size:18.8px;color:#1a1a1a;font-family:'Liberation Sans', sans-serif;font-weight:normal;letter-spacing:0.22px">6956 ms</div>
<div class="t" style="left:836.00px;top:652.29px;font-size:18.8px;color:#1a1a1a;font-family:'Liberation Sans', sans-serif;font-weight:normal;letter-spacing:0.22px">258975</div>
<div class="r" style="left:6px;top:892px;width:997px;height:3px;background:#f3f3f3"></div>
<div class="r" style="left:1016px;top:477px;width:999px;height:419px;background:#ececec;border:1px solid #c8c8c8;box-sizing:border-box"></div>
<div class="r" style="left:1017px;top:478px;width:121px;height:41px;background:#ebebeb"></div>
<div class="r" style="left:1138px;top:478px;width:123px;height:41px;background:#fff;border-top:3px solid #b9b9b9;box-sizing:border-box"></div>
<div class="r" style="left:1138px;top:478px;width:1px;height:41px;background:#d6d6d6"></div>
<div class="r" style="left:1261px;top:478px;width:1px;height:41px;background:#d6d6d6"></div>
<div class="r" style="left:1017px;top:519px;width:121px;height:1px;background:#c2c2c2"></div>
<div class="r" style="left:1261px;top:519px;width:753px;height:1px;background:#c2c2c2"></div>
<div class="t" style="left:1025.50px;top:489.50px;font-size:19px;color:#1a1a1a;font-family:'Liberation Sans', sans-serif;font-weight:normal;">Query Code</div>
<div class="t" style="left:1148.00px;top:489.50px;font-size:19px;color:#1a1a1a;font-family:'Liberation Sans', sans-serif;font-weight:normal;">Explain plan</div>
<div class="r" style="left:1017px;top:520px;width:996px;height:42px;background:#dfe6f5"></div>
<div class="r" style="left:1017px;top:520px;width:996px;height:6px;background:#e9ebea"></div>
<div class="r" style="left:1017px;top:561px;width:996px;height:1px;background:#c4c8d0"></div>
<svg class="r" style="left:1025px;top:531px" width="23" height="23" viewBox="0 0 23 23"><circle cx="11.5" cy="11.6" r="11.1" fill="#2170c4" stroke="#1f5fa8" stroke-width="0.6"/><rect x="10.9" y="5.8" width="2.4" height="2.3" fill="#bff0ff"/><path d="M9.5 9.2H13.5V15.8H16V17.4H8.5V15.8H11V10.8H9.5Z" fill="#e4f6ff"/></svg>
<div class="t" style="left:1058.00px;top:533.62px;font-size:18.1px;color:#1a1a1a;font-family:'Liberation Sans', sans-serif;font-weight:normal;">Query plan and execution statistics when the query ran at 2023-11-15T12:32:54.936+0000</div>
<div class="r" style="left:1017px;top:562px;width:974px;height:278px;background:#fff"></div>
<div class="r" style="left:1991px;top:562px;width:22px;height:300px;background:#f7f7f7;border-left:1px solid #ececec;box-sizing:border-box"></div>
<div class="r" style="left:1017px;top:840px;width:996px;height:22px;background:#f7f7f7;border-top:1px solid #ececec;box-sizing:border-box"></div>
<div class="r" style="left:1017px;top:861px;width:996px;height:1px;background:#cfcfcf"></div>
<div class="r" style="left:1996px;top:567px;width:12px;height:258px;background:#7b7b7b;border-radius:6px"></div>
<div class="r" style="left:1408px;top:847px;width:579px;height:10px;background:#7b7b7b;border-radius:5px"></div>
<svg class="r" style="left:0;top:0" width="2023" height="902" viewBox="0 0 2023 902"><rect x="1082.5" y="584" width="105.0" height="101" fill="#fff" stroke="#333" stroke-width="1.8"/><rect x="1304.5" y="584" width="87.0" height="102.5" fill="#fff" stroke="#333" stroke-width="1.8"/><rect x="1507.5" y="583.5" width="104.0" height="82.0" fill="#fff" stroke="#333" stroke-width="1.8"/><rect x="1728.5" y="584" width="228.5" height="102.5" fill="#fff" stroke="#333" stroke-width="1.8"/><rect x="1728.5" y="729.5" width="228.5" height="100.5" fill="#fff" stroke="#333" stroke-width="1.8"/><path d="M1018 602.7H1081.5" stroke="#000" stroke-width="7"/><path d="M1218 602.5H1303.5" stroke="#000" stroke-width="7.5"/><path d="M1188.5 602.5L1222 585.5V619.5Z" fill="#000"/><path d="M1420 602.2H1506.5" stroke="#000" stroke-width="7.5"/><path d="M1392.5 602.2L1426.7 586V619Z" fill="#000"/><path d="M1648 602.6H1727.5" stroke="#000" stroke-width="8.5"/><path d="M1613 602.3L1652.6 582.5V621.5Z" fill="#000"/><path d="M1755 687V760H1780" stroke="#000" stroke-width="9" fill="none"/><path d="M1815 760L1775.5 741V779Z" fill="#000"/></svg>
<div class="t" style="left:1039.50px;top:581.06px;font-size:16.75px;color:#303030;font-family:'Liberation Mono', monospace;font-weight:normal;transform:scaleY(1.12);transform-origin:0 13.94px;-webkit-text-stroke:0.4px #303030">99K</div>
<div class="t" style="left:1251.50px;top:579.56px;font-size:16.75px;color:#303030;font-family:'Liberation Mono', monospace;font-weight:normal;transform:scaleY(1.12);transform-origin:0 13.94px;-webkit-text-stroke:0.4px #303030">702K</div>
<div class="t" style="left:1455.00px;top:579.56px;font-size:16.75px;color:#303030;font-family:'Liberation Mono', monospace;font-weight:normal;transform:scaleY(1.12);transform-origin:0 13.94px;-webkit-text-stroke:0.4px #303030">702K</div>
<div class="t" style="left:1675.00px;top:579.76px;font-size:16.75px;color:#303030;font-family:'Liberation Mono', monospace;font-weight:normal;transform:scaleY(1.12);transform-origin:0 13.94px;-webkit-text-stroke:0.4px #303030">2.5M</div>
<div class="t" style="left:1771.50px;top:699.06px;font-size:16.75px;color:#303030;font-family:'Liberation Mono', monospace;font-weight:normal;transform:scaleY(1.12);transform-origin:0 13.94px;-webkit-text-stroke:0.4px #303030">1.0 GiB</div>
<div class="t" style="left:1114.50px;top:638.66px;font-size:16.75px;color:#303030;font-family:'Liberation Mono', monospace;font-weight:normal;transform:scaleY(1.12);transform-origin:0 13.94px;-webkit-text-stroke:0.4px #303030">Sort</div>
<div class="t" style="left:1104.50px;top:657.46px;font-size:16.75px;color:#303030;font-family:'Liberation Mono', monospace;font-weight:normal;transform:scaleY(1.12);transform-origin:0 13.94px;-webkit-text-stroke:0.4px #303030">buffer</div>
<div class="t" style="left:1327.50px;top:638.76px;font-size:16.75px;color:#303030;font-family:'Liberation Mono', monospace;font-weight:normal;transform:scaleY(1.12);transform-origin:0 13.94px;-webkit-text-stroke:0.4px #303030">Sort</div>
<div class="t" style="left:1341.00px;top:664.36px;font-size:16.75px;color:#303030;font-family:'Liberation Mono', monospace;font-weight:normal;transform:scaleY(1.12);transform-origin:0 13.94px;-webkit-text-stroke:0.4px #303030">0.5s</div>
<div class="t" style="left:1529.00px;top:638.66px;font-size:16.75px;color:#303030;font-family:'Liberation Mono', monospace;font-weight:normal;transform:scaleY(1.12);transform-origin:0 13.94px;-webkit-text-stroke:0.4px #303030">Filter</div>
<div class="t" style="left:1765.50px;top:638.36px;font-size:16.75px;color:#303030;font-family:'Liberation Mono', monospace;font-weight:normal;transform:scaleY(1.12);transform-origin:0 13.94px;-webkit-text-stroke:0.4px #303030">Collection scan</div>
<div class="t" style="left:1907.00px;top:664.06px;font-size:16.75px;color:#303030;font-family:'Liberation Mono', monospace;font-weight:normal;transform:scaleY(1.12);transform-origin:0 13.94px;-webkit-text-stroke:0.4px #303030">1.8s</div>
<div class="t" style="left:1791.00px;top:783.76px;font-size:16.75px;color:#303030;font-family:'Liberation Mono', monospace;font-weight:normal;transform:scaleY(1.12);transform-origin:0 13.94px;-webkit-text-stroke:0.4px #303030">Collection</div>
<div class="t" style="left:1771.50px;top:803.26px;font-size:16.75px;color:#303030;font-family:'Liberation Mono', monospace;font-weight:normal;transform:scaleY(1.12);transform-origin:0 13.94px;-webkit-text-stroke:0.4px #303030">chicago.crimes</div>
<svg class="r" style="left:0;top:0" width="2023" height="902" viewBox="0 0 2023 902"><text x="0" y="0" font-family="Liberation Serif" font-weight="bold" font-size="100" fill="#2f70b8" stroke="#2f70b8" stroke-width="5" transform="translate(1113.8,611.9) scale(0.2548,0.2774) translate(-0.8,0)">A</text><text x="0" y="0" font-family="Liberation Serif" font-weight="bold" font-size="100" fill="#b3322a" stroke="#b3322a" stroke-width="5" transform="translate(1115.5,633) scale(0.2480,0.2538) translate(-1.2,0)">Z</text><text x="0" y="0" font-family="Liberation Serif" font-weight="bold" font-size="100" fill="#2f70b8" stroke="#2f70b8" stroke-width="5" transform="translate(1329.5,611.9) scale(0.2507,0.2730) translate(-0.8,0)">A</text><text x="0" y="0" font-family="Liberation Serif" font-weight="bold" font-size="100" fill="#b3322a" stroke="#b3322a" stroke-width="5" transform="translate(1330.9,633) scale(0.2448,0.2538) translate(-1.2,0)">Z</text><rect x="1135.9" y="592.8" width="17.2" height="20.2" fill="#fdb515" stroke="#d99a10" stroke-width="1"/><path d="M1136 598.5H1153M1136 604.5H1153M1140.5 593V613M1148.5 593V613" stroke="#e7a51c" stroke-width="0.7"/><path d="M1144.2 612.8V598.5" stroke="#1e1e1e" stroke-width="1.4"/><path d="M1144.2 594.8L1141 602.5H1147.4Z" fill="#1e1e1e"/><rect x="1135" y="614.1" width="20" height="21.2" fill="#fbfbfb" stroke="#c8c8c8" stroke-width="1"/><path d="M1136 635.8H1155.5V615" stroke="#b5b5b5" stroke-width="1" fill="none"/><text x="0" y="0" font-family="Liberation Serif" font-weight="bold" font-size="100" fill="#1a1a1a" transform="translate(1137.5,631.5) scale(0.142,0.186)" letter-spacing="-6">10</text><path d="M1356.2 592.8Q1356.2 592 1357 592H1361.2Q1362 592 1362 592.8V626.5H1365.8Q1366.6 626.5 1366 627.3L1359.6 634.1Q1359.1 634.6 1358.6 634.1L1352.2 627.3Q1351.6 626.5 1352.4 626.5H1356.2Z" fill="#3db0ea" stroke="#2588c6" stroke-width="1"/><path d="M1358.2 593.5V626" stroke="#8fd8fa" stroke-width="1.2"/><defs><linearGradient id="fg" x1="0" x2="1" y1="0" y2="0"><stop offset="0" stop-color="#3d9fdc"/><stop offset="0.35" stop-color="#86ccf2"/><stop offset="1" stop-color="#3a9ad8"/></linearGradient><linearGradient id="gg" x1="0" x2="1"><stop offset="0" stop-color="#5fb812"/><stop offset="0.45" stop-color="#9be52a"/><stop offset="1" stop-color="#62b814"/></linearGradient></defs><path d="M1541.5 592.2H1577Q1579.2 592.2 1579.2 594.4V600.5Q1579.2 602.6 1577.7 604.2L1564.2 618.3V631.5Q1564.2 633 1562.8 632.8L1557 631.8Q1555.4 631.5 1555.4 630V618.3L1541.3 604.2Q1539.5 602.6 1539.5 600.5V594.4Q1539.5 592.2 1541.5 592.2Z" fill="url(#fg)" stroke="#2f8acb" stroke-width="1.1"/><path d="M1541.5 597.3H1577.3" stroke="#1f74b8" stroke-width="2.2"/><path d="M1544 599.9H1575" stroke="#b9e6fb" stroke-width="1"/><path d="M1543 603.5H1562" stroke="#a9ddf7" stroke-width="0.8" opacity="0.8"/><rect x="1824.3" y="594.5" width="37.0" height="37.700000000000045" rx="2" fill="#e9f8ff" stroke="#2a8cc4" stroke-width="2"/><path d="M1825.3 599.1H1860.3" stroke="#6fb3e0" stroke-width="2"/><path d="M1825.3 606.8H1860.3" stroke="#9cc3dc" stroke-width="1"/><path d="M1825.3 613.8H1860.3" stroke="#9cc3dc" stroke-width="1"/><path d="M1825.3 620.7H1860.3" stroke="#9cc3dc" stroke-width="1"/><path d="M1825.3 627.6H1860.3" stroke="#9cc3dc" stroke-width="1"/><path d="M1853.2 595.5V631.2" stroke="#a8c4da" stroke-width="1"/><rect x="1824.3" y="739.7" width="37.0" height="37.59999999999991" rx="2" fill="#e9f8ff" stroke="#2a8cc4" stroke-width="2"/><path d="M1825.3 744.5H1860.3" stroke="#6fb3e0" stroke-width="2"/><path d="M1825.3 752H1860.3" stroke="#9cc3dc" stroke-width="1"/><path d="M1825.3 759.2H1860.3" stroke="#9cc3dc" stroke-width="1"/><path d="M1825.3 766.2H1860.3" stroke="#9cc3dc" stroke-width="1"/><path d="M1825.3 773.4H1860.3" stroke="#9cc3dc" stroke-width="1"/><path d="M1835.7 740.7V776.3" stroke="#a8c4da" stroke-width="1"/><path d="M1844.6 740.7V776.3" stroke="#a8c4da" stroke-width="1"/><path d="M1853.2 740.7V776.3" stroke="#a8c4da" stroke-width="1"/><path d="M1837.6 592.7H1846V625.2H1850.4L1841.8 634.6L1833.2 625.2H1837.6Z" fill="url(#gg)" stroke="#4a9410" stroke-width="1"/></svg>
</body></html>
